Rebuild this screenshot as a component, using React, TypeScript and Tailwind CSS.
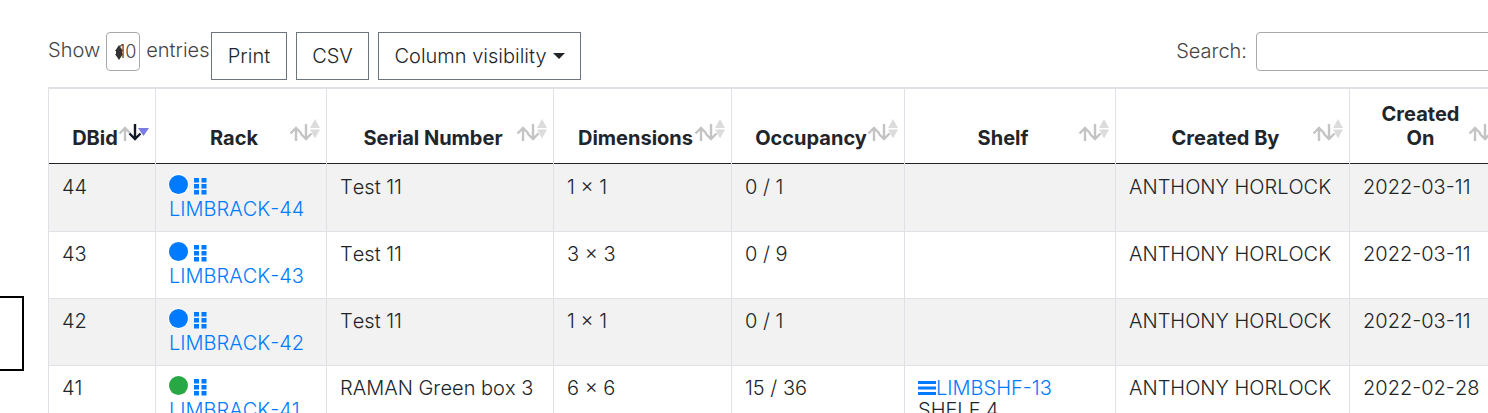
const racks = [
  { id: 44, dot: "bg-[#007bff]", serial: "Test 11", dims: "1 × 1", occ: "0 / 1", created: "2022-03-11" },
  { id: 43, dot: "bg-[#007bff]", serial: "Test 11", dims: "3 × 3", occ: "0 / 9", created: "2022-03-11" },
  { id: 42, dot: "bg-[#007bff]", serial: "Test 11", dims: "1 × 1", occ: "0 / 1", created: "2022-03-11" },
  { id: 41, dot: "bg-[#28a745]", serial: "RAMAN Green box 3", dims: "6 × 6", occ: "15 / 36", created: "2022-02-28", shelf: true },
];

const columns = [
  { label: "DBid", width: "w-[107px]", active: true },
  { label: "Rack", width: "w-[171px]" },
  { label: "Serial Number", width: "w-[227px]" },
  { label: "Dimensions", width: "w-[178px]" },
  { label: "Occupancy", width: "w-[173px]" },
  { label: "Shelf", width: "w-[211px]" },
  { label: "Created By", width: "w-[234px]" },
  { label: "Created On", width: "w-[156px]" },
];

function SortIcon({ active }: { active?: boolean }) {
  const downColor = active ? "#111827" : "#c4c4c4";
  return (
    <svg className="absolute top-[29px] right-[5px]" width="32" height="24" viewBox="0 0 32 24" fill="none">
      <path d="M7 23V10M1.5 15.5 7 10l5.5 5.5" stroke="#c4c4c4" strokeWidth="2.4" />
      <path d="M17 6v15M11.5 15.5 17 21l5.5-5.5" stroke={downColor} strokeWidth="2.4" />
      {active ? (
        <path d="M20 10h11l-5.5 8z" fill="#7b7be6" />
      ) : (
        <>
          <path d="M21 10 26 1l5 9z" fill="#dcdcdc" />
          <path d="M21 11.500h10l-5 9z" fill="#dcdcdc" />
        </>
      )}
    </svg>
  );
}

function GridIcon() {
  return (
    <svg width="13" height="17" viewBox="0 0 13 17" fill="#007bff" className="inline-block">
      <rect x="0" y="0" width="5" height="4.5" />
      <rect x="7.5" y="0" width="5" height="4.5" />
      <rect x="0" y="6" width="5" height="4.5" />
      <rect x="7.5" y="6" width="5" height="4.5" />
      <rect x="0" y="12" width="5" height="4.5" />
      <rect x="7.5" y="12" width="5" height="4.5" />
    </svg>
  );
}

function BarsIcon() {
  return (
    <svg width="18" height="14" viewBox="0 0 18 14" fill="#007bff" className="inline-block">
      <rect y="0" width="18" height="3" />
      <rect y="5.5" width="18" height="3" />
      <rect y="11" width="18" height="3" />
    </svg>
  );
}

export default function App() {
  return (
    <div className="relative h-[413px] w-[1488px] overflow-hidden bg-white pt-8 pl-12 text-[20px] font-light text-[#212529] font-['Inter',sans-serif]">
      <div className="absolute top-[296px] left-0 h-[75px] w-6 border-2 border-l-0 border-black" />

      <div className="flex w-[1458px] items-start">
        <div className="flex h-[36px] w-[163px] items-center leading-[36px]">
          <span className="text-[#444]">Show</span>
          <div className="relative mt-[3px] mr-[6px] ml-[6px] flex h-[39px] w-[34px] shrink-0 items-center rounded border border-[#aaa] pl-[11px] text-[18px] text-[#444]">
            10
            <svg className="absolute top-[12px] left-[7px]" width="10" height="15" viewBox="0 0 10 15" fill="#333">
              <path d="M5 0 9 6H1zM5 15 1 9h8z" />
              <rect x="2" y="5" width="6" height="5" />
            </svg>
          </div>
          <span className="text-[#444]">entries</span>
        </div>
        <button className="h-12 w-[76px] border border-[#6c757d] text-center">Print</button>
        <button className="ml-[9px] h-12 w-[73px] border border-[#6c757d] text-center">CSV</button>
        <button className="ml-[9px] flex h-12 w-[203px] items-center justify-center border border-[#6c757d]">
          Column visibility
          <span className="ml-[6px] h-0 w-0 border-x-[6px] border-t-[6px] border-x-transparent border-t-[#212529]" />
        </button>
        <div className="ml-auto flex h-[39px] items-center">
          <span className="mr-[9px] -translate-y-px text-[#444]">Search:</span>
          <div className="h-[39px] w-[250px] rounded border border-[#aaa]" />
        </div>
      </div>

      <table className="mt-[7px] w-[1458px] table-fixed border-collapse border-t-2 border-t-[#dee2e6]">
        <thead>
          <tr className="h-[75px] border-b border-b-[#212529]">
            {columns.map((col) => (
              <th
                key={col.label}
                className={`relative border-x border-x-[#dee2e6] pr-[26px] pb-[13px] pl-3 text-center align-bottom leading-6 font-bold ${col.width}`}
              >
                {col.label === "Created On" ? (
                  <>
                    Created
                    <br />
                    On
                  </>
                ) : (
                  col.label
                )}
                <SortIcon active={col.active} />
              </th>
            ))}
          </tr>
        </thead>
        <tbody className="[font-kerning:none]">
          {racks.map((rack, i) => {
            // first row sits one pixel taller under the header line
            const pad = i === 0 ? "pt-3" : "pt-[11px]";
            const cell = `border-x border-x-[#dee2e6] px-[13px] align-top leading-[22px] ${pad}`;
            return (
              <tr
                key={rack.id}
                className={`border-b border-b-[#dee2e6] ${i === 0 ? "h-[68px]" : "h-[67px]"} ${i % 2 === 0 ? "bg-[#f2f2f2]" : ""}`}
              >
                <td className={cell}>{rack.id}</td>
                <td className={`border-x border-x-[#dee2e6] px-[13px] align-top leading-[22px] ${i === 0 ? "pt-[10px]" : "pt-[9px]"}`}>
                  <div className="flex h-6 items-center">
                    <span className={`h-[19px] w-[19px] -translate-y-px rounded-full ring-1 ring-white ${rack.dot}`} />
                    <span className="ml-[6px] flex translate-y-px"><GridIcon /></span>
                  </div>
                  <a className="block text-[#007bff]">LIMBRACK-{rack.id}</a>
                </td>
                <td className={cell}>{rack.serial}</td>
                <td className={cell}>{rack.dims}</td>
                <td className={cell}>{rack.occ}</td>
                <td className={cell}>
                  {rack.shelf && (
                    <>
                      <a className="flex items-center text-[#007bff]"><BarsIcon />LIMBSHF-13</a>
                      <div>SHELF 4</div>
                    </>
                  )}
                </td>
                <td className={cell}>ANTHONY HORLOCK</td>
                <td className={cell}>{rack.created}</td>
              </tr>
            );
          })}
        </tbody>
      </table>
    </div>
  );
}
